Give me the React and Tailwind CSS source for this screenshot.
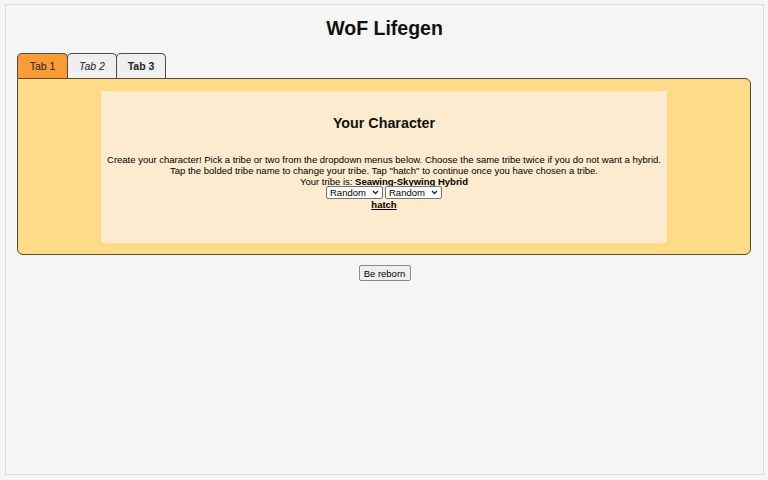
import React, { useState } from 'react';

const TRIBES = ['Random', 'Mudwing', 'Sandwing', 'Skywing', 'Seawing', 'Rainwing', 'Icewing', 'Nightwing', 'Silkwing', 'Hivewing', 'Leafwing'];

const TribeSelect = ({ value, onChange }) => (
    <span className="relative inline-block">
        <select
            value={value}
            onChange={(e) => onChange(e.target.value)}
            className="appearance-none block w-[57px] h-[13px] bg-white border border-[#767676] rounded-[2px] pl-[3px] text-[9.5px] leading-[11px] text-black"
        >
            {TRIBES.map((t) => (
                <option key={t}>{t}</option>
            ))}
        </select>
        <svg className="pointer-events-none absolute right-[4px] top-[4px]" width="7" height="5" viewBox="0 0 7 5">
            <path d="M1 1 L3.5 3.5 L6 1" fill="none" stroke="#222" strokeWidth="1.3" />
        </svg>
    </span>
);

const App = () => {
    const [tab, setTab] = useState(1);
    const [first, setFirst] = useState('Random');
    const [second, setSecond] = useState('Random');

    const tabs = [
        { id: 1, label: 'Tab 1', style: '' },
        { id: 2, label: 'Tab 2', style: 'italic' },
        { id: 3, label: 'Tab 3', style: 'font-bold' },
    ];

    return (
        <div className="min-h-[480px] bg-[#f5f5f5] pt-[4px] pl-[5px] font-['Liberation_Sans',Arial,sans-serif] text-[#111]">
            <div className="w-[759px] h-[471px] border border-[#dcdcdc] pt-[12px]">
                <h1 className="text-center text-[19.5px] leading-[23px] font-bold text-[#111]">WoF Lifegen</h1>

                {/* tab strip */}
                <div className="flex ml-[11px] mt-[13px]">
                    {tabs.map((t, i) => (
                        <button
                            key={t.id}
                            onClick={() => setTab(t.id)}
                            className={`${i === 0 ? 'w-[51px]' : 'w-[50px] -ml-px'} h-[25px] border border-b-0 border-[#4a4a4a] rounded-t-[5px] text-[10.5px] leading-[24px] text-[#222] ${t.style} ${tab === t.id ? 'bg-[#f99c35]' : 'bg-[#efefef]'}`}
                        >
                            {t.label}
                        </button>
                    ))}
                </div>

                {/* panel */}
                <div className="ml-[11px] w-[734px] border border-[#5b4a33] rounded-[6px] rounded-tl-none bg-[#fedb87] pt-[12px] pb-[11px]">
                    <div className="mx-auto w-[566px] h-[152px] bg-[#fdebcf] pt-[23px] text-center">
                        <h3 className="text-[14.3px] leading-[18px] font-bold text-[#111]">Your Character</h3>
                        <div className="mt-[22px] text-[9.5px] leading-[11px] text-black">
                            <p>Create your character! Pick a tribe or two from the dropdown menus below. Choose the same tribe twice if you do not want a hybrid.</p>
                            <p>Tap the bolded tribe name to change your tribe. Tap "hatch" to continue once you have chosen a tribe.</p>
                            <p>
                                Your tribe is: <span className="font-bold">Seawing-Skywing Hybrid</span>
                            </p>
                            <div className="flex justify-center gap-[2px] -mt-px">
                                <TribeSelect value={first} onChange={setFirst} />
                                <TribeSelect value={second} onChange={setSecond} />
                            </div>
                            <p className="font-bold underline">hatch</p>
                        </div>
                    </div>
                </div>

                <div className="flex justify-center mt-[10px]">
                    <button className="h-[16px] w-[52px] bg-[#efefef] border border-[#8a8a8a] rounded-[2px] text-[9.5px] leading-[13px] text-black">
                        Be reborn
                    </button>
                </div>
            </div>
        </div>
    );
};

export default App;
